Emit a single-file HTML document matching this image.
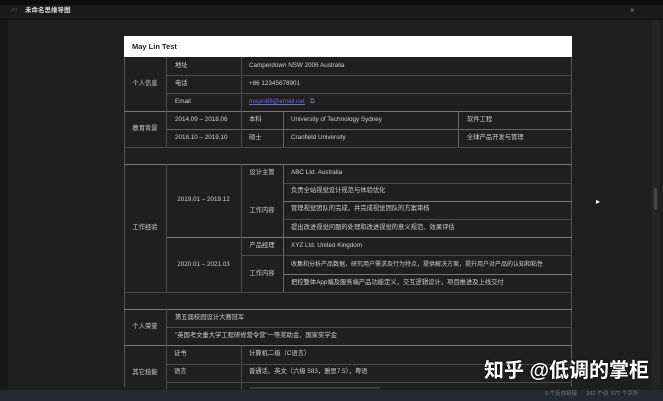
<!DOCTYPE html><html><head><meta charset="utf-8"><style>
*{margin:0;padding:0;box-sizing:border-box}
body{width:663px;height:401px;overflow:hidden;background:#1e1e1e;font-family:"Liberation Sans","Noto Sans CJK SC",sans-serif;color:#cfcfcf;font-size:6.3px;position:relative}
.a{position:absolute}
.t{position:absolute;white-space:nowrap;line-height:1}
.c{position:absolute;white-space:nowrap;line-height:1;text-align:center}
.h{position:absolute;height:1px;background:#4a4a4a}
.v{position:absolute;width:1px;background:#4a4a4a}
</style></head><body>
<div class="a" style="left:0;top:0;width:663px;height:5px;background:#0c0c0c"></div>
<div class="a" style="left:0;top:5px;width:663px;height:15px;background:#1a1a1a;border-bottom:1px solid #111"></div>
<div class="t" style="left:25px;top:8px;color:#ddd;font-size:6.5px;font-weight:bold">未命名思维导图</div>
<div class="t" style="left:11px;top:8px;color:#777">▱</div>
<div class="t" style="left:630px;top:7px;color:#888;font-size:8px">×</div>
<div class="a" style="left:0;top:20px;width:8px;height:370px;background:#181818"></div>
<div class="a" style="left:652px;top:20px;width:7px;height:370px;background:#242424"></div>
<div class="a" style="left:654px;top:188px;width:3px;height:22px;background:#444;border-radius:2px"></div>
<div class="a" style="left:250px;top:386px;width:130px;height:3px;background:#3a3a3a"></div>
<div class="a" style="left:0;top:390px;width:663px;height:11px;background:#262a2f"></div>
<div class="t" style="left:545px;top:392px;color:#777;font-size:5.5px">0 个反向链接 &nbsp;&nbsp;&nbsp;&nbsp; 342 个词 &nbsp;877 个字符</div>

<div class="a" style="left:124px;top:36px;width:448px;height:21px;background:#fff"></div>
<div class="t" style="left:132px;top:43px;color:#222;font-weight:bold;font-size:7.5px">May Lin Test</div>
<div class="a" style="left:124px;top:57px;width:448px;height:330px;background:#1f1f1f;border-left:1px solid #555;border-right:1px solid #555"></div>
<div class="h" style="left:166px;top:75px;width:406px"></div>
<div class="h" style="left:166px;top:93px;width:406px"></div>
<div class="h" style="left:124px;top:111px;width:448px;background:#777"></div>
<div class="h" style="left:166px;top:129px;width:406px;background:#666"></div>
<div class="h" style="left:124px;top:147px;width:448px"></div>
<div class="h" style="left:124px;top:164px;width:448px;background:#777"></div>
<div class="h" style="left:283px;top:183px;width:289px"></div>
<div class="h" style="left:283px;top:201px;width:289px;background:#777"></div>
<div class="h" style="left:283px;top:219px;width:289px"></div>
<div class="h" style="left:166px;top:237px;width:406px;background:#777"></div>
<div class="h" style="left:241px;top:255px;width:331px"></div>
<div class="h" style="left:283px;top:274px;width:289px;background:#777"></div>
<div class="h" style="left:124px;top:292px;width:448px"></div>
<div class="h" style="left:124px;top:309px;width:448px;background:#777"></div>
<div class="h" style="left:166px;top:327px;width:406px"></div>
<div class="h" style="left:124px;top:345px;width:448px;background:#777"></div>
<div class="h" style="left:166px;top:364px;width:406px"></div>
<div class="h" style="left:166px;top:382px;width:406px"></div>
<div class="v" style="left:166px;top:57px;height:90px"></div>
<div class="v" style="left:241px;top:57px;height:90px"></div>
<div class="v" style="left:283px;top:111px;height:36px;background:#666"></div>
<div class="v" style="left:458px;top:111px;height:36px;background:#666"></div>
<div class="v" style="left:166px;top:164px;height:128px"></div>
<div class="v" style="left:241px;top:164px;height:128px"></div>
<div class="v" style="left:283px;top:164px;height:128px;background:#666"></div>
<div class="v" style="left:166px;top:309px;height:80px"></div>
<div class="v" style="left:241px;top:345px;height:44px"></div>

<div class="c" style="left:124px;width:42px;top:81px">个人信息</div>
<div class="t" style="left:175px;top:63px">地址</div>
<div class="t" style="left:249px;top:63px">Camperdown NSW 2006 Australia</div>
<div class="t" style="left:175px;top:81px">电话</div>
<div class="t" style="left:249px;top:81px">+86 12345678901</div>
<div class="t" style="left:175px;top:99px">Email</div>
<div class="t" style="left:249px;top:99px;color:#6a6adf;text-decoration:underline">mayin88@email.net</div><div class="t" style="left:310px;top:99px;color:#888">⧉</div>
<div class="c" style="left:124px;width:42px;top:126px">教育背景</div>
<div class="t" style="left:175px;top:117px">2014.09 – 2018.06</div>
<div class="t" style="left:249px;top:117px">本科</div>
<div class="t" style="left:291px;top:117px">University of Technology Sydney</div>
<div class="t" style="left:467px;top:117px">软件工程</div>
<div class="t" style="left:175px;top:135px">2018.10 – 2019.10</div>
<div class="t" style="left:249px;top:135px">硕士</div>
<div class="t" style="left:291px;top:135px">Cranfield University</div>
<div class="t" style="left:467px;top:135px">全球产品开发与管理</div>
<div class="c" style="left:124px;width:42px;top:225px">工作经验</div>
<div class="c" style="left:166px;width:75px;top:197px">2019.01 – 2019.12</div>
<div class="c" style="left:241px;width:42px;top:170px">设计主管</div>
<div class="c" style="left:241px;width:42px;top:208px">工作内容</div>
<div class="t" style="left:291px;top:170px">ABC Ltd. Australia</div>
<div class="t" style="left:291px;top:188px">负责全站视觉设计规范与体验优化</div>
<div class="t" style="left:291px;top:206px">管理视觉团队的完成，并完成视觉团队的方案审核</div>
<div class="t" style="left:291px;top:225px">提出改进视觉问题的处理和改进视觉的意义规范、效果评估</div>
<div class="c" style="left:166px;width:75px;top:262px">2020.01 – 2021.03</div>
<div class="c" style="left:241px;width:42px;top:243px">产品经理</div>
<div class="c" style="left:241px;width:42px;top:271px">工作内容</div>
<div class="t" style="left:291px;top:243px">XYZ Ltd. United Kingdom</div>
<div class="t" style="left:291px;top:262px;font-size:6px">收集和分析产品数据，研究用户需求及行为特点，提供解决方案，提升用户对产品的认知和粘性</div>
<div class="t" style="left:291px;top:280px">把控整体App端及服务端产品功能定义，交互逻辑设计，项目推进及上线交付</div>
<div class="c" style="left:124px;width:42px;top:324px">个人荣誉</div>
<div class="t" style="left:175px;top:315px">第五届校园设计大赛冠军</div>
<div class="t" style="left:175px;top:333px">"英国考文垂大学工程研修营令营"一等奖助金、国家奖学金</div>
<div class="c" style="left:124px;width:42px;top:370px">其它技能</div>
<div class="t" style="left:174px;top:351px">证书</div>
<div class="t" style="left:249px;top:351px">计算机二级（C语言）</div>
<div class="t" style="left:174px;top:369px">语言</div>
<div class="t" style="left:249px;top:369px">普通话、英文（六级 583，雅思7.5），粤语</div>
<div class="t" style="left:596px;top:198px;color:#fff;font-size:8px">▸</div>
<div class="t" style="left:484px;top:361px;color:#fff;font-size:20px;font-weight:bold;text-shadow:0 0 2px #000">知乎 @低调的掌柜</div>
</body></html>
